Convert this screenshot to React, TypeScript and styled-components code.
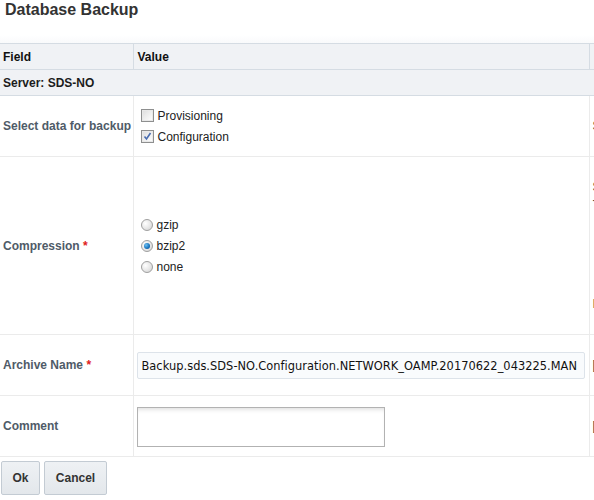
import styled, { createGlobalStyle } from 'styled-components';

const GlobalStyle = createGlobalStyle`
  html, body {
    margin: 0;
    padding: 0;
    background: #ffffff;
    overflow: hidden;
  }
  body {
    font-family: "Liberation Sans", Arial, sans-serif;
    font-size: 12px;
    color: #333333;
  }
`;

const options = {
    data: [
        { label: 'Provisioning', checked: false },
        { label: 'Configuration', checked: true },
    ],
    compression: [
        { label: 'gzip', selected: false },
        { label: 'bzip2', selected: true },
        { label: 'none', selected: false },
    ],
};

const App = () => {
    return (
        <Page>
            <GlobalStyle />
            <Title>Database Backup</Title>
            <Fade />
            <Table>
                <colgroup>
                    <col style={{ width: 133 }} />
                    <col style={{ width: 456 }} />
                    <col style={{ width: 220 }} />
                </colgroup>
                <thead>
                    <tr>
                        <HeadCell>Field</HeadCell>
                        <HeadCell>Value</HeadCell>
                        <HeadCell />
                    </tr>
                </thead>
                <tbody>
                    {/* Server group row */}
                    <tr>
                        <GroupCell colSpan={3}>Server: SDS-NO</GroupCell>
                    </tr>

                    <Row height={61}>
                        <LabelCell>Select data for backup</LabelCell>
                        <ValueCell>
                            <OptionList>
                                {options.data.map((opt, index) => (
                                    <Option key={index}>
                                        <CheckBox checked={opt.checked}>
                                            {opt.checked && (
                                                <svg width="9" height="9" viewBox="0 0 9 9">
                                                    <path d="M1.5 4.5 L3.5 7 L7.5 1" fill="none" stroke="#4a6db0" strokeWidth="1.6" />
                                                </svg>
                                            )}
                                        </CheckBox>
                                        {opt.label}
                                    </Option>
                                ))}
                            </OptionList>
                        </ValueCell>
                        <DescCell>Select data to back up</DescCell>
                    </Row>

                    <Row height={178}>
                        <LabelCell>Compression <Required>*</Required></LabelCell>
                        <ValueCell>
                            <OptionList>
                                {options.compression.map((opt, index) => (
                                    <Option key={index}>
                                        <Radio selected={opt.selected} />
                                        {opt.label}
                                    </Option>
                                ))}
                            </OptionList>
                        </ValueCell>
                        <DescCell>
                            {'Select compression algorithm\n-\n\n\n\n\n\n\n\nIf none is chosen'}
                        </DescCell>
                    </Row>

                    <Row height={61}>
                        <LabelCell>Archive Name <Required>*</Required></LabelCell>
                        <ValueCell>
                            <TextInput
                                readOnly
                                value="Backup.sds.SDS-NO.Configuration.NETWORK_OAMP.20170622_043225.MAN"
                            />
                        </ValueCell>
                        <DescCell>[Default: automatically named]</DescCell>
                    </Row>

                    <Row height={61}>
                        <LabelCell>Comment</LabelCell>
                        <ValueCell>
                            <TextArea />
                        </ValueCell>
                        <DescCell>[Optional comment]</DescCell>
                    </Row>
                </tbody>
            </Table>

            <ButtonBar>
                <Button width={39}>Ok</Button>
                <Button width={63}>Cancel</Button>
            </ButtonBar>
        </Page>
    );
};

export default App;

const Page = styled.div`
  width: 594px;
  height: 500px;
  overflow: hidden;
`;

const Title = styled.h1`
  margin: 0;
  padding: 0 5px;
  font-size: 16px;
  line-height: 20px;
  font-weight: bold;
  color: #333333;
`;

const Fade = styled.div`
  height: 23px;
  background: linear-gradient(to bottom, #ffffff 0%, #ffffff 65%, #f9fafb 100%);
`;

const Table = styled.table`
  width: 809px;
  table-layout: fixed;
  border-collapse: collapse;
  border-spacing: 0;
`;

const HeadCell = styled.th`
  height: 25px;
  padding: 0 3px 0 4px;
  text-align: left;
  font-size: 12px;
  font-weight: bold;
  color: #111111;
  background: #f0f2f5;
  border-top: 1px solid #d5dce3;
  border-bottom: 1px solid #d5dce3;
  border-right: 1px solid #d5dce3;

  &:first-child {
    padding-left: 3px;
  }
`;

const GroupCell = styled.td`
  height: 25px;
  padding: 0 3px;
  font-size: 12px;
  font-weight: bold;
  color: #1c1c1c;
  background: #f0f2f5;
  border-bottom: 1px solid #d5dce3;
`;

const Row = styled.tr<{ height: number }>`
  height: ${p => p.height}px;

  td {
    border-bottom: 1px solid #ebebeb;
  }
`;

const LabelCell = styled.td`
  padding: 0 3px;
  vertical-align: middle;
  font-weight: bold;
  color: #4f5b68;
  white-space: nowrap;
  border-right: 1px solid #ebebeb;
`;

const Required = styled.span`
  color: #e02020;
`;

const ValueCell = styled.td`
  padding: 0 3px;
  vertical-align: middle;
  border-right: 1px solid #ebebeb;
`;

const DescCell = styled.td`
  padding: 0 3px;
  vertical-align: middle;
  font-size: 12px;
  line-height: 13px;
  color: #333333;
  white-space: pre-line;
`;

const OptionList = styled.div`
  display: flex;
  flex-direction: column;
  gap: 8px;
  padding-left: 4px;
`;

const Option = styled.label`
  display: flex;
  align-items: center;
  gap: 4px;
  height: 13px;
  font-size: 12px;
  color: #222222;
`;

const CheckBox = styled.span<{ checked: boolean }>`
  box-sizing: border-box;
  width: 13px;
  height: 13px;
  display: flex;
  align-items: center;
  justify-content: center;
  border: 1px solid #8e8f8f;
  background: linear-gradient(135deg, #dcdcdc 0%, #f2f2f2 60%, #ffffff 100%);
  box-shadow: inset 0 0 0 1px #e8e8e8;
`;

const Radio = styled.span<{ selected: boolean }>`
  box-sizing: border-box;
  position: relative;
  width: 12px;
  height: 12px;
  border-radius: 50%;
  border: 1px solid #a0a0a0;
  background: radial-gradient(circle at 35% 35%, #ffffff 0%, #e6e6e6 55%, #cfcfcf 100%);

  &::after {
    content: '';
    display: ${p => (p.selected ? 'block' : 'none')};
    position: absolute;
    left: 2px;
    top: 2px;
    width: 6px;
    height: 6px;
    border-radius: 50%;
    background: radial-gradient(circle at 35% 35%, #6fc0f0 0%, #1a78c2 55%, #0b3f7a 100%);
  }
`;

const TextInput = styled.input`
  box-sizing: border-box;
  display: block;
  width: 448px;
  height: 27px;
  margin-top: 1px;
  padding: 0 4px;
  font-family: "DejaVu Sans", Tahoma, sans-serif;
  font-size: 11.4px;
  letter-spacing: 0.04px;
  color: #111111;
  background: #f9fbfd;
  border: 1px solid #dde3ea;
  border-radius: 2px;
  outline: none;
`;

const TextArea = styled.textarea`
  box-sizing: border-box;
  display: block;
  width: 248px;
  height: 40px;
  margin-top: 1px;
  padding: 2px;
  resize: none;
  background: #ffffff;
  border: 1px solid #b2b2b2;
  box-shadow: inset 0 4px 5px -3px #d8d8d8;
  outline: none;
`;

const ButtonBar = styled.div`
  display: flex;
  gap: 4px;
  padding: 4px 0 0 1px;
`;

const Button = styled.button<{ width: number }>`
  box-sizing: border-box;
  width: ${p => p.width}px;
  height: 34px;
  padding: 0;
  font-family: "Liberation Sans", Arial, sans-serif;
  font-size: 12px;
  font-weight: bold;
  color: #333333;
  background: linear-gradient(to bottom, #eef1f4 0%, #e3e7eb 100%);
  border: 1px solid #c3cbd3;
  border-radius: 2px;
`;
